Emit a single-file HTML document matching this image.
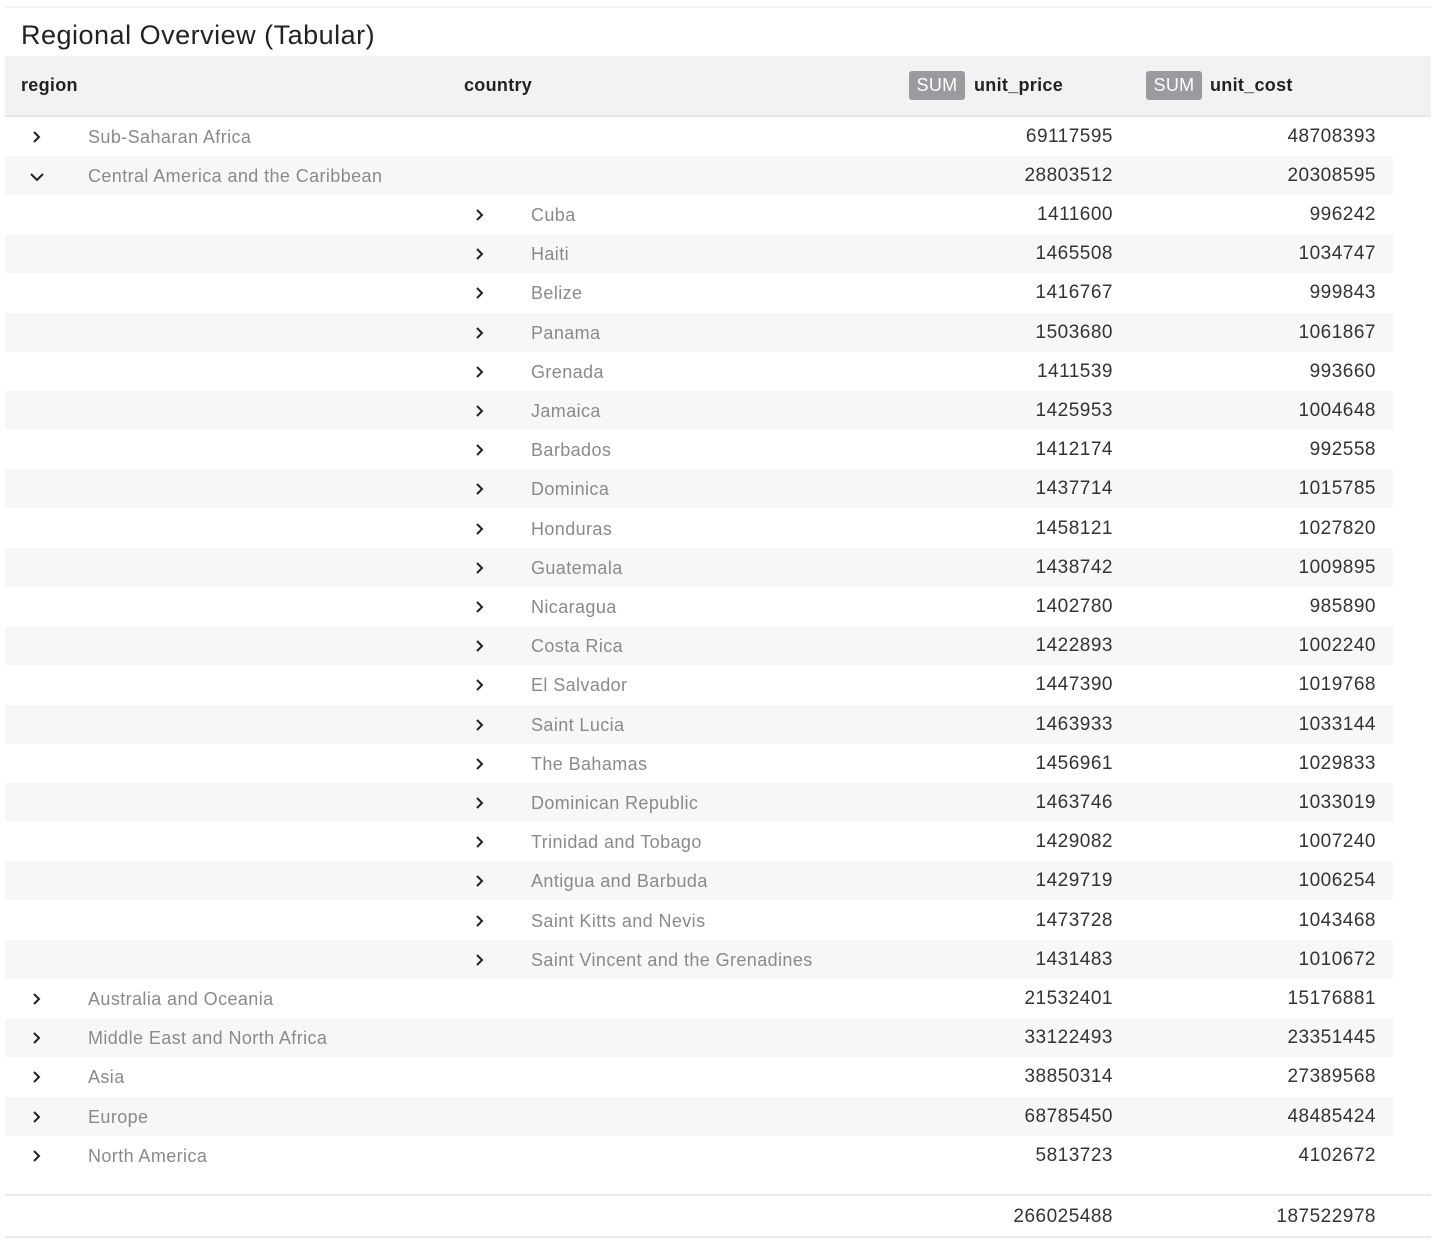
<!DOCTYPE html>
<html><head><meta charset="utf-8"><style>
body{margin:0;width:1442px;height:1242px;background:#fff;font-family:"Liberation Sans",Arial,sans-serif;position:relative;overflow:hidden}
.tl{position:absolute;left:5px;right:11px;top:6px;height:2px;background:#f3f3f3}
h1{position:absolute;left:21px;top:17px;margin:0;font-size:27px;font-weight:normal;color:#222;line-height:36px;letter-spacing:0.5px}
.hd{position:absolute;left:5px;width:1426px;top:56px;height:59px;background:#f2f2f2;border-bottom:2px solid #e6e6e6}
.hd span{position:absolute;top:18px;font-size:18px;font-weight:bold;color:#222;line-height:22px;letter-spacing:0.3px}
.hd .b{top:15px;height:29px;line-height:29px;width:56px;text-align:center;background:#9a9a9f;color:#fff;font-weight:normal;border-radius:3px;font-size:18px}
.r{position:absolute;left:5px;width:1388px;height:39.2px}
.g{background:#f7f7f7}
.r span{position:absolute;top:9px;font-size:18px;line-height:22px}
.l1,.l2{letter-spacing:0.4px}
.l1{left:83px;color:#8a8a8a}
.l2{left:526px;color:#8a8a8a}
.p,.c{font-size:19px!important;letter-spacing:0.5px;color:#333}
.p{right:280px}
.c{right:17px}
.r svg{position:absolute;top:14px}
.v1{left:27px}.v2{left:470px}
.ln{position:absolute;left:5px;width:1426px;height:2px;background:#ececec}
</style></head><body>
<div class="tl"></div>
<h1>Regional Overview (Tabular)</h1>
<div class="hd"><span style="left:16px">region</span><span style="left:459px">country</span><span class="b" style="left:904px">SUM</span><span style="left:969px">unit_price</span><span class="b" style="left:1141px">SUM</span><span style="left:1205px">unit_cost</span></div>

<div class="r" style="top:116.5px"><svg class="v1" width="10" height="12"><polyline points="2,1 7,6 2,11" fill="none" stroke="#222" stroke-width="2"/></svg><span class="l1">Sub-Saharan Africa</span><span class="p">69117595</span><span class="c">48708393</span></div>
<div class="r g" style="top:155.7px"><svg class="v1" width="14" height="12" style="left:25px"><polyline points="1,4 7,10 13,4" fill="none" stroke="#222" stroke-width="2"/></svg><span class="l1">Central America and the Caribbean</span><span class="p">28803512</span><span class="c">20308595</span></div>
<div class="r" style="top:194.9px"><svg class="v2" width="10" height="12"><polyline points="2,1 7,6 2,11" fill="none" stroke="#222" stroke-width="2"/></svg><span class="l2">Cuba</span><span class="p">1411600</span><span class="c">996242</span></div>
<div class="r g" style="top:234.1px"><svg class="v2" width="10" height="12"><polyline points="2,1 7,6 2,11" fill="none" stroke="#222" stroke-width="2"/></svg><span class="l2">Haiti</span><span class="p">1465508</span><span class="c">1034747</span></div>
<div class="r" style="top:273.3px"><svg class="v2" width="10" height="12"><polyline points="2,1 7,6 2,11" fill="none" stroke="#222" stroke-width="2"/></svg><span class="l2">Belize</span><span class="p">1416767</span><span class="c">999843</span></div>
<div class="r g" style="top:312.5px"><svg class="v2" width="10" height="12"><polyline points="2,1 7,6 2,11" fill="none" stroke="#222" stroke-width="2"/></svg><span class="l2">Panama</span><span class="p">1503680</span><span class="c">1061867</span></div>
<div class="r" style="top:351.7px"><svg class="v2" width="10" height="12"><polyline points="2,1 7,6 2,11" fill="none" stroke="#222" stroke-width="2"/></svg><span class="l2">Grenada</span><span class="p">1411539</span><span class="c">993660</span></div>
<div class="r g" style="top:390.9px"><svg class="v2" width="10" height="12"><polyline points="2,1 7,6 2,11" fill="none" stroke="#222" stroke-width="2"/></svg><span class="l2">Jamaica</span><span class="p">1425953</span><span class="c">1004648</span></div>
<div class="r" style="top:430.1px"><svg class="v2" width="10" height="12"><polyline points="2,1 7,6 2,11" fill="none" stroke="#222" stroke-width="2"/></svg><span class="l2">Barbados</span><span class="p">1412174</span><span class="c">992558</span></div>
<div class="r g" style="top:469.3px"><svg class="v2" width="10" height="12"><polyline points="2,1 7,6 2,11" fill="none" stroke="#222" stroke-width="2"/></svg><span class="l2">Dominica</span><span class="p">1437714</span><span class="c">1015785</span></div>
<div class="r" style="top:508.5px"><svg class="v2" width="10" height="12"><polyline points="2,1 7,6 2,11" fill="none" stroke="#222" stroke-width="2"/></svg><span class="l2">Honduras</span><span class="p">1458121</span><span class="c">1027820</span></div>
<div class="r g" style="top:547.7px"><svg class="v2" width="10" height="12"><polyline points="2,1 7,6 2,11" fill="none" stroke="#222" stroke-width="2"/></svg><span class="l2">Guatemala</span><span class="p">1438742</span><span class="c">1009895</span></div>
<div class="r" style="top:586.9px"><svg class="v2" width="10" height="12"><polyline points="2,1 7,6 2,11" fill="none" stroke="#222" stroke-width="2"/></svg><span class="l2">Nicaragua</span><span class="p">1402780</span><span class="c">985890</span></div>
<div class="r g" style="top:626.1px"><svg class="v2" width="10" height="12"><polyline points="2,1 7,6 2,11" fill="none" stroke="#222" stroke-width="2"/></svg><span class="l2">Costa Rica</span><span class="p">1422893</span><span class="c">1002240</span></div>
<div class="r" style="top:665.3px"><svg class="v2" width="10" height="12"><polyline points="2,1 7,6 2,11" fill="none" stroke="#222" stroke-width="2"/></svg><span class="l2">El Salvador</span><span class="p">1447390</span><span class="c">1019768</span></div>
<div class="r g" style="top:704.5px"><svg class="v2" width="10" height="12"><polyline points="2,1 7,6 2,11" fill="none" stroke="#222" stroke-width="2"/></svg><span class="l2">Saint Lucia</span><span class="p">1463933</span><span class="c">1033144</span></div>
<div class="r" style="top:743.7px"><svg class="v2" width="10" height="12"><polyline points="2,1 7,6 2,11" fill="none" stroke="#222" stroke-width="2"/></svg><span class="l2">The Bahamas</span><span class="p">1456961</span><span class="c">1029833</span></div>
<div class="r g" style="top:782.9px"><svg class="v2" width="10" height="12"><polyline points="2,1 7,6 2,11" fill="none" stroke="#222" stroke-width="2"/></svg><span class="l2">Dominican Republic</span><span class="p">1463746</span><span class="c">1033019</span></div>
<div class="r" style="top:822.1px"><svg class="v2" width="10" height="12"><polyline points="2,1 7,6 2,11" fill="none" stroke="#222" stroke-width="2"/></svg><span class="l2">Trinidad and Tobago</span><span class="p">1429082</span><span class="c">1007240</span></div>
<div class="r g" style="top:861.3px"><svg class="v2" width="10" height="12"><polyline points="2,1 7,6 2,11" fill="none" stroke="#222" stroke-width="2"/></svg><span class="l2">Antigua and Barbuda</span><span class="p">1429719</span><span class="c">1006254</span></div>
<div class="r" style="top:900.5px"><svg class="v2" width="10" height="12"><polyline points="2,1 7,6 2,11" fill="none" stroke="#222" stroke-width="2"/></svg><span class="l2">Saint Kitts and Nevis</span><span class="p">1473728</span><span class="c">1043468</span></div>
<div class="r g" style="top:939.7px"><svg class="v2" width="10" height="12"><polyline points="2,1 7,6 2,11" fill="none" stroke="#222" stroke-width="2"/></svg><span class="l2">Saint Vincent and the Grenadines</span><span class="p">1431483</span><span class="c">1010672</span></div>
<div class="r" style="top:978.9px"><svg class="v1" width="10" height="12"><polyline points="2,1 7,6 2,11" fill="none" stroke="#222" stroke-width="2"/></svg><span class="l1">Australia and Oceania</span><span class="p">21532401</span><span class="c">15176881</span></div>
<div class="r g" style="top:1018.1px"><svg class="v1" width="10" height="12"><polyline points="2,1 7,6 2,11" fill="none" stroke="#222" stroke-width="2"/></svg><span class="l1">Middle East and North Africa</span><span class="p">33122493</span><span class="c">23351445</span></div>
<div class="r" style="top:1057.3px"><svg class="v1" width="10" height="12"><polyline points="2,1 7,6 2,11" fill="none" stroke="#222" stroke-width="2"/></svg><span class="l1">Asia</span><span class="p">38850314</span><span class="c">27389568</span></div>
<div class="r g" style="top:1096.5px"><svg class="v1" width="10" height="12"><polyline points="2,1 7,6 2,11" fill="none" stroke="#222" stroke-width="2"/></svg><span class="l1">Europe</span><span class="p">68785450</span><span class="c">48485424</span></div>
<div class="r" style="top:1135.7px"><svg class="v1" width="10" height="12"><polyline points="2,1 7,6 2,11" fill="none" stroke="#222" stroke-width="2"/></svg><span class="l1">North America</span><span class="p">5813723</span><span class="c">4102672</span></div>

<div class="ln" style="top:1194px"></div>
<div class="r" style="top:1197px"><span class="p">266025488</span><span class="c">187522978</span></div>
<div class="ln" style="top:1236px"></div>
</body></html>
